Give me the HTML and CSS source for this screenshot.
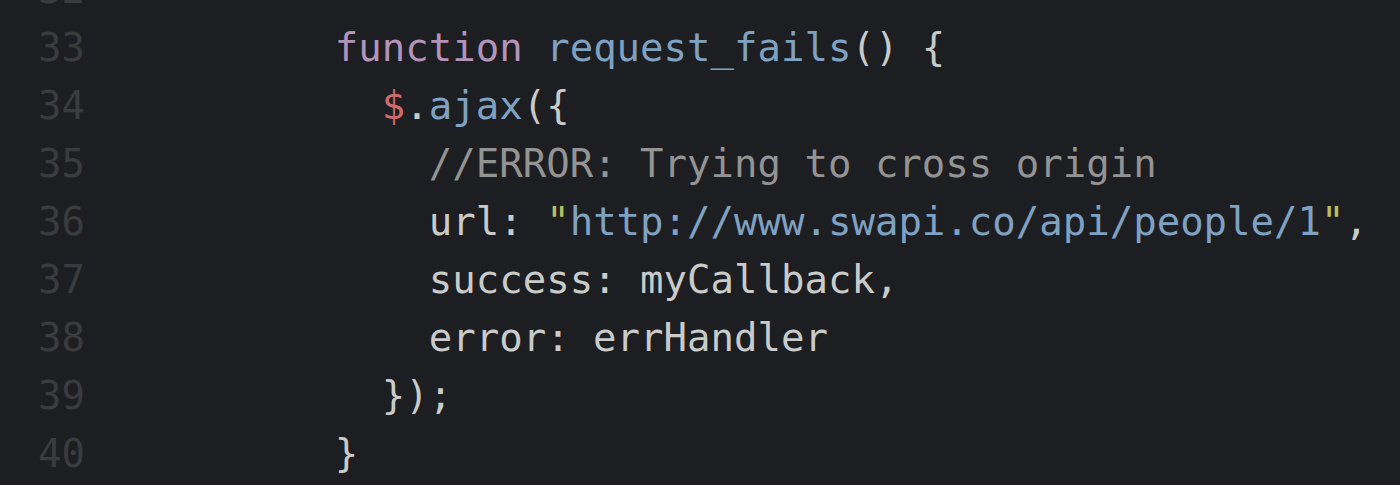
FILE: index.html
```html
<!DOCTYPE html>
<html lang="en">
<head>
  <meta charset="UTF-8">
  <meta name="viewport" content="width=device-width, initial-scale=1.0">
  <title>request_fails</title>
  <link rel="stylesheet" href="styles.css">
</head>
<body>
  <div class="editor">
    <!-- Line numbers -->
    <div class="gutter">
      <div class="ln">32</div>
      <div class="ln">33</div>
      <div class="ln">34</div>
      <div class="ln">35</div>
      <div class="ln">36</div>
      <div class="ln">37</div>
      <div class="ln">38</div>
      <div class="ln">39</div>
      <div class="ln">40</div>
    </div>

    <!-- Code -->
    <div class="code">
      <div class="line"> </div>
      <div class="line">        <span class="kw">function</span> <span class="fn">request_fails</span>() {</div>
      <div class="line">          <span class="var">$</span>.<span class="fn">ajax</span>({</div>
      <div class="line">            <span class="cm">//ERROR: Trying to cross origin</span></div>
      <div class="line">            url: <span class="str">"</span><span class="fn">http://www.swapi.co/api/people/1</span><span class="str">"</span>,</div>
      <div class="line">            success: myCallback,</div>
      <div class="line">            error: errHandler</div>
      <div class="line">          });</div>
      <div class="line">        }</div>
    </div>
  </div>
</body>
</html>
```

FILE: styles.css
```css
body {
  margin: 0;
  padding: 0;
  background: #1d1e21;
  overflow: hidden;
}

.editor {
  display: flex;
  margin-top: -39px;
  font-family: "DejaVu Sans Mono", "Liberation Mono", monospace;
  font-size: 39px;
  line-height: 58px;
  color: #c9cbc9;
}

.gutter {
  width: 85px;
  text-align: right;
  color: #3a3b3e;
}

.ln {
  height: 58px;
}

.code {
  padding-left: 62px;
}

.line {
  height: 58px;
  white-space: pre;
}

.kw {
  color: #b294bb;
}

.fn {
  color: #7fa1c2;
}

.var {
  color: #d06a6a;
}

.str {
  color: #b8bf5f;
}

.cm {
  color: #939393;
}
```
